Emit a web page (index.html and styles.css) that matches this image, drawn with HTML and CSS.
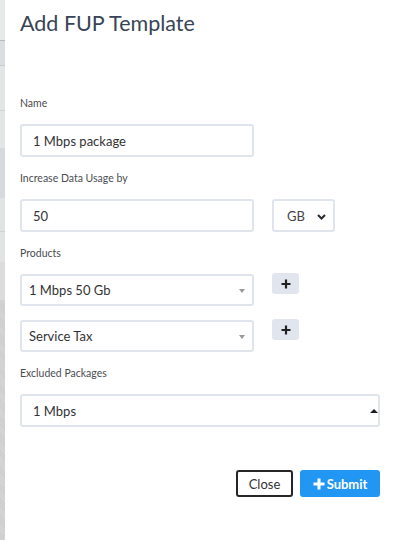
FILE: index.html
```html
<!DOCTYPE html>
<html>
<head>
<meta charset="utf-8">
<link rel="stylesheet" href="styles.css">
</head>
<body>
<div class="page">
  <div class="backdrop-strip"></div>
  <div class="modal">
    <h1 class="title">Add FUP Template</h1>
    <form class="form">
      <div class="group">
        <label class="label">Name</label>
        <div class="field field-name"><span class="value">1 Mbps package</span></div>
      </div>
      <div class="group">
        <label class="label">Increase Data Usage by</label>
        <div class="row">
          <div class="field field-name"><span class="value">50</span></div>
          <div class="field unit-select">
            <span class="value">GB</span>
            <svg class="chevron" width="9" height="6" viewBox="0 0 9 6"><path d="M1 1 L4.5 4.5 L8 1" fill="none" stroke="#2b2b2b" stroke-width="2"/></svg>
          </div>
        </div>
      </div>
      <div class="group">
        <label class="label">Products</label>
        <div class="row">
          <div class="field select"><span class="select-value">1 Mbps 50 Gb</span><span class="caret"></span></div>
          <button type="button" class="add-btn"><svg width="10" height="10" viewBox="0 0 10 10"><path d="M5 0.5 V9.5 M0.5 5 H9.5" stroke="#222" stroke-width="2.2"/></svg></button>
        </div>
      </div>
      <div class="group">
        <div class="row">
          <div class="field select"><span class="select-value">Service Tax</span><span class="caret"></span></div>
          <button type="button" class="add-btn"><svg width="10" height="10" viewBox="0 0 10 10"><path d="M5 0.5 V9.5 M0.5 5 H9.5" stroke="#222" stroke-width="2.2"/></svg></button>
        </div>
      </div>
      <div class="group">
        <label class="label">Excluded Packages</label>
        <div class="field multi-select"><span class="value">1 Mbps</span><span class="caret-up"></span></div>
      </div>
      <div class="actions">
        <button type="button" class="btn btn-close">Close</button>
        <button type="button" class="btn btn-submit"><svg width="12" height="12" viewBox="0 0 12 12"><path d="M6 0.5 V11.5 M0.5 6 H11.5" stroke="#fff" stroke-width="3"/></svg>Submit</button>
      </div>
    </form>
  </div>
</div>
</body>
</html>
```

FILE: styles.css
```css
* { box-sizing: border-box; }
html, body { margin: 0; padding: 0; background: #fff; }
body { font-family: Lato, "Open Sans", sans-serif; color: #333; }

.page { display: flex; width: 394px; height: 540px; overflow: hidden; }

.backdrop-strip {
  width: 5px;
  flex: none;
  background:
    linear-gradient(to bottom,
      #e8e9eb 0, #e8e9eb 40px,
      #b8babe 40px, #b8babe 41px,
      #dcdde0 41px, #dcdde0 65px,
      #c9cbce 65px, #c9cbce 66px,
      #e4e5e7 66px, #e4e5e7 110px,
      #d0d2d4 110px, #d0d2d4 111px,
      #e4e5e7 111px, #e4e5e7 148px,
      #d6dade 148px, #d6dade 198px,
      #e2e3e5 198px, #e2e3e5 231px,
      #d0d2d4 231px, #d0d2d4 232px,
      #e2e3e5 232px, #e2e3e5 262px,
      #dcdcdc 262px, #dcdcdc 300px,
      transparent 300px),
    repeating-linear-gradient(45deg, #cdcdcd 0, #cdcdcd 1px, #d6d6d6 1px, #d6d6d6 2px);
}

.modal { flex: 1; padding: 10px 14px 0 15px; }

.title {
  margin: 0 0 60px;
  font-size: 21.5px;
  line-height: 26px;
  font-weight: 400;
  color: #384556;
}

.form { margin: 0; }

.group { margin-bottom: 14px; }

.label {
  display: block;
  font-size: 10.5px;
  line-height: 14px;
  color: #4a4d52;
  margin-bottom: 14px;
}

.row { display: flex; align-items: flex-start; gap: 18px; }

.field {
  border: 2px solid #e0e4ec;
  border-radius: 3px;
  background: #fff;
  display: flex;
  align-items: center;
  font-size: 13px;
  color: #333;
  position: relative;
}

.field-name { width: 234px; height: 33px; padding-left: 11px; }

.unit-select { width: 63px; height: 33px; padding-left: 13px; gap: 0; }
.unit-select .value { color: #444; }
.chevron { position: absolute; right: 7px; top: 13px; }

.select { width: 234px; height: 32px; padding-left: 7px; }
.caret {
  position: absolute;
  right: 7px;
  top: 13px;
  width: 0; height: 0;
  border-left: 3px solid transparent;
  border-right: 3px solid transparent;
  border-top: 4px solid #9a9a9a;
}

.add-btn {
  width: 27px;
  height: 21px;
  margin-top: -1px;
  border: none;
  border-radius: 3px;
  background: #e1e5ee;
  padding: 0;
  display: flex;
  align-items: center;
  justify-content: center;
}

.multi-select { width: 360px; height: 33px; padding-left: 11px; }
.caret-up {
  position: absolute;
  right: 0;
  top: 13px;
  width: 0; height: 0;
  border-left: 4px solid transparent;
  border-right: 4px solid transparent;
  border-bottom: 4px solid #1e1e1e;
}

.actions {
  display: flex;
  justify-content: flex-end;
  gap: 7px;
  margin-top: 43px;
}

.btn {
  height: 27px;
  border-radius: 3px;
  font-family: Lato, "Open Sans", sans-serif;
  font-size: 13px;
  display: flex;
  align-items: center;
  justify-content: center;
  padding: 0;
}

.btn-close {
  width: 57px;
  border: 2px solid #262626;
  background: #fff;
  color: #333;
}

.btn-submit {
  width: 80px;
  border: none;
  background: #2196f3;
  color: #fff;
  font-weight: 700;
  gap: 2px;
}
```
